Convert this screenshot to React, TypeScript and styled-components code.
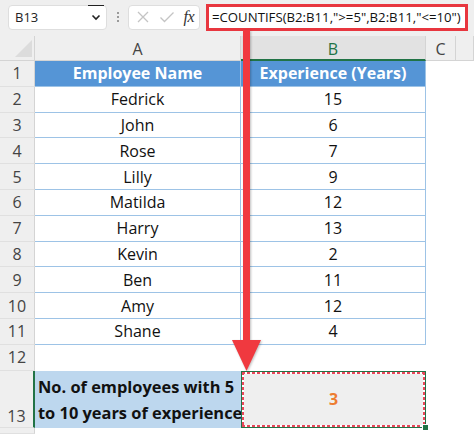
import React from "react";
import styled, { createGlobalStyle } from "styled-components";

const Global = createGlobalStyle`
  html, body { margin: 0; padding: 0; background: #fff; }
  body {
    width: 474px;
    height: 434px;
    overflow: hidden;
    font-family: "Open Sans", "Liberation Sans", sans-serif;
  }
`;

const GREEN = "#217346";
const TABLE_LINE = "#9dc3e6";
const ANT_RED = "#e8465a";

const Page = styled.div`
  position: relative;
  width: 474px;
  height: 434px;
  overflow: hidden;
  background: #fff;
`;

/* ---------- formula bar ---------- */

const FormulaBar = styled.div`
  height: 36px;
  box-sizing: border-box;
  background: #efefef;
  display: flex;
  align-items: center;
  padding: 0 6px 2px 8px;
`;

const NameBox = styled.div`
  position: relative;
  width: 99px;
  height: 25px;
  box-sizing: border-box;
  background: #fff;
  border: 1px solid #dedede;
  border-radius: 4px;
  display: flex;
  align-items: center;
  justify-content: space-between;
  padding: 0 5px 0 6px;
  font-size: 13px;
  color: #222;
`;

const DropTick = styled.span`
  position: absolute;
  top: -1px;
  right: 2px;
  width: 16px;
  height: 1px;
  background: #222;
`;

const Grip = styled.div`
  width: 21px;
  display: flex;
  flex-direction: column;
  align-items: center;
  gap: 2px;
`;

const GripDot = styled.span`
  width: 2px;
  height: 2px;
  background: #9a9a9a;
`;

const IconBox = styled.div`
  width: 72px;
  height: 25px;
  box-sizing: border-box;
  background: #fff;
  border: 1px solid #dedede;
  border-radius: 4px;
  display: flex;
  align-items: center;
  justify-content: space-between;
  padding: 0 5px 0 7px;
`;

const Fx = styled.span`
  font-family: "Liberation Serif", "DejaVu Serif", serif;
  font-style: italic;
  font-size: 16px;
  color: #333;
  letter-spacing: -0.5px;
`;

const FormulaBox = styled.div`
  margin-left: 6px;
  flex: 1;
  height: 27px;
  box-sizing: border-box;
  border: 3px solid #e8363f;
  background: #fff;
  display: flex;
  align-items: center;
  padding-left: 3px;
  font-size: 13.2px;
  color: #111;
  white-space: nowrap;
  overflow: hidden;
`;

/* ---------- sheet grid ---------- */

const Sheet = styled.div`
  display: grid;
  grid-template-columns: 35px 206px 185px 30px 18px;
  grid-template-rows: 25px repeat(11, 25.8px) 26px 57px 1fr;
  height: 398px;
`;

const Corner = styled.div`
  background: #efefef;
  border-right: 1px solid #d4d4d4;
  border-bottom: 1px solid #d4d4d4;
  display: flex;
  align-items: flex-end;
  justify-content: flex-end;
  padding: 0 2px 3px 0;
  box-sizing: border-box;
`;

const ColHead = styled.div<{ $active?: boolean }>`
  background: ${(p) => (p.$active ? "#e2e2e2" : "#efefef")};
  color: ${(p) => (p.$active ? GREEN : "#444")};
  border-right: 1px solid #d4d4d4;
  border-bottom: ${(p) => (p.$active ? `2px solid ${GREEN}` : "1px solid #d4d4d4")};
  box-sizing: border-box;
  display: flex;
  align-items: center;
  justify-content: center;
  font-size: 16px;
  padding-top: 2px;
`;

const RowHead = styled.div<{ $active?: boolean; $tall?: boolean }>`
  background: #efefef;
  color: #444;
  border-right: ${(p) => (p.$active ? `2px solid ${GREEN}` : "1px solid #d4d4d4")};
  border-bottom: 1px solid #e0e0e0;
  box-sizing: border-box;
  display: flex;
  align-items: ${(p) => (p.$tall ? "flex-end" : "center")};
  justify-content: center;
  padding-bottom: ${(p) => (p.$tall ? "0" : "0")};
  font-size: 16px;
`;

const Cell = styled.div<{ $head?: boolean }>`
  background: ${(p) => (p.$head ? "#5595d6" : "#fff")};
  color: ${(p) => (p.$head ? "#fff" : "#111")};
  font-weight: ${(p) => (p.$head ? 700 : 400)};
  border-bottom: 1px solid ${TABLE_LINE};
  border-right: 1px solid ${TABLE_LINE};
  box-sizing: border-box;
  display: flex;
  align-items: center;
  justify-content: center;
  font-size: 16px;
  white-space: nowrap;
`;

const Blank = styled.div``;

const LabelCell = styled.div`
  background: #bdd7ee;
  font-weight: 700;
  font-size: 16.4px;
  line-height: 26px;
  color: #111;
  padding: 0 0 2px 3px;
  display: flex;
  flex-direction: column;
  justify-content: flex-end;
  white-space: nowrap;
  overflow: hidden;
`;

const ResultCell = styled.div`
  position: relative;
  background: #efefef;
  display: flex;
  align-items: center;
  justify-content: center;
  color: #ed7d31;
  font-weight: 700;
  font-size: 16px;
`;

const Ants = styled.div`
  position: absolute;
  inset: 0;
  border: 1px solid ${GREEN};
`;

/* copy-range "marching ants": red dashes with white gaps on all four edges */
const AntsInner = styled.div`
  position: absolute;
  inset: 0;
  background:
    repeating-linear-gradient(90deg, ${ANT_RED} 0 3px, #fff 3px 5px) top left / 100% 2px no-repeat,
    repeating-linear-gradient(90deg, ${ANT_RED} 0 3px, #fff 3px 5px) bottom left / 100% 2px no-repeat,
    repeating-linear-gradient(180deg, ${ANT_RED} 0 3px, #fff 3px 5px) top left / 2px 100% no-repeat,
    repeating-linear-gradient(180deg, ${ANT_RED} 0 3px, #fff 3px 5px) top right / 2px 100% no-repeat;
`;

const FillHandle = styled.span`
  position: absolute;
  right: -3px;
  bottom: -3px;
  width: 5px;
  height: 5px;
  background: ${GREEN};
  border: 1px solid #fff;
`;

const ResultValue = styled.span`
  position: relative;
`;

const Arrow = styled.svg`
  position: absolute;
  left: 228px;
  top: 30px;
  filter: drop-shadow(1px 1px 1px rgba(0, 0, 0, 0.25));
`;

const rows: [string, string][] = [
  ["Fedrick", "15"],
  ["John", "6"],
  ["Rose", "7"],
  ["Lilly", "9"],
  ["Matilda", "12"],
  ["Harry", "13"],
  ["Kevin", "2"],
  ["Ben", "11"],
  ["Amy", "12"],
  ["Shane", "4"],
];

export default function App() {
  return (
    <Page>
      <Global />
      <FormulaBar>
        <NameBox>
          <span>B13</span>
          <DropTick />
          <svg width="10" height="7" viewBox="0 0 10 7">
            <path d="M1.5 1.5 L5 5 L8.5 1.5" fill="none" stroke="#222" strokeWidth="1.6" />
          </svg>
        </NameBox>
        <Grip>
          <GripDot />
          <GripDot />
          <GripDot />
        </Grip>
        <IconBox>
          <svg width="14" height="14" viewBox="0 0 14 14">
            <path d="M2 2 L12 12 M12 2 L2 12" stroke="#c4c4c4" strokeWidth="1.3" />
          </svg>
          <svg width="16" height="14" viewBox="0 0 16 14">
            <path d="M1.5 7.5 L5.5 11.5 L14.5 2.5" fill="none" stroke="#c4c4c4" strokeWidth="1.3" />
          </svg>
          <Fx>fx</Fx>
        </IconBox>
        <FormulaBox>=COUNTIFS(B2:B11,"&gt;=5",B2:B11,"&lt;=10")</FormulaBox>
      </FormulaBar>

      <Sheet>
        <Corner>
          <svg width="17" height="17" viewBox="0 0 17 17">
            <path d="M17 0 L17 17 L0 17 Z" fill="#dcdcdc" />
          </svg>
        </Corner>
        <ColHead>A</ColHead>
        <ColHead $active>B</ColHead>
        <ColHead>C</ColHead>
        <ColHead />

        <RowHead>1</RowHead>
        <Cell $head>Employee Name</Cell>
        <Cell $head>Experience (Years)</Cell>
        <Blank />
        <Blank />

        {rows.map(([name, years], i) => (
          <React.Fragment key={name}>
            <RowHead>{i + 2}</RowHead>
            <Cell>{name}</Cell>
            <Cell>{years}</Cell>
            <Blank />
            <Blank />
          </React.Fragment>
        ))}

        <RowHead>12</RowHead>
        <Blank />
        <Blank />
        <Blank />
        <Blank />

        <RowHead $active $tall>13</RowHead>
        <LabelCell>
          <span>No. of employees with 5</span>
          <span>to 10 years of experience</span>
        </LabelCell>
        <ResultCell>
          <Ants>
            <AntsInner />
          </Ants>
          <FillHandle />
          <ResultValue>3</ResultValue>
        </ResultCell>
        <Blank />
        <Blank />

        <RowHead />
        <Blank />
        <Blank />
        <Blank />
        <Blank />
      </Sheet>

      <Arrow width="36" height="344" viewBox="0 0 36 344">
        <rect x="15" y="0" width="7" height="312" fill="#f0393f" />
        <path d="M4 310 L33 310 L18.5 341 Z" fill="#f0393f" />
      </Arrow>
    </Page>
  );
}
